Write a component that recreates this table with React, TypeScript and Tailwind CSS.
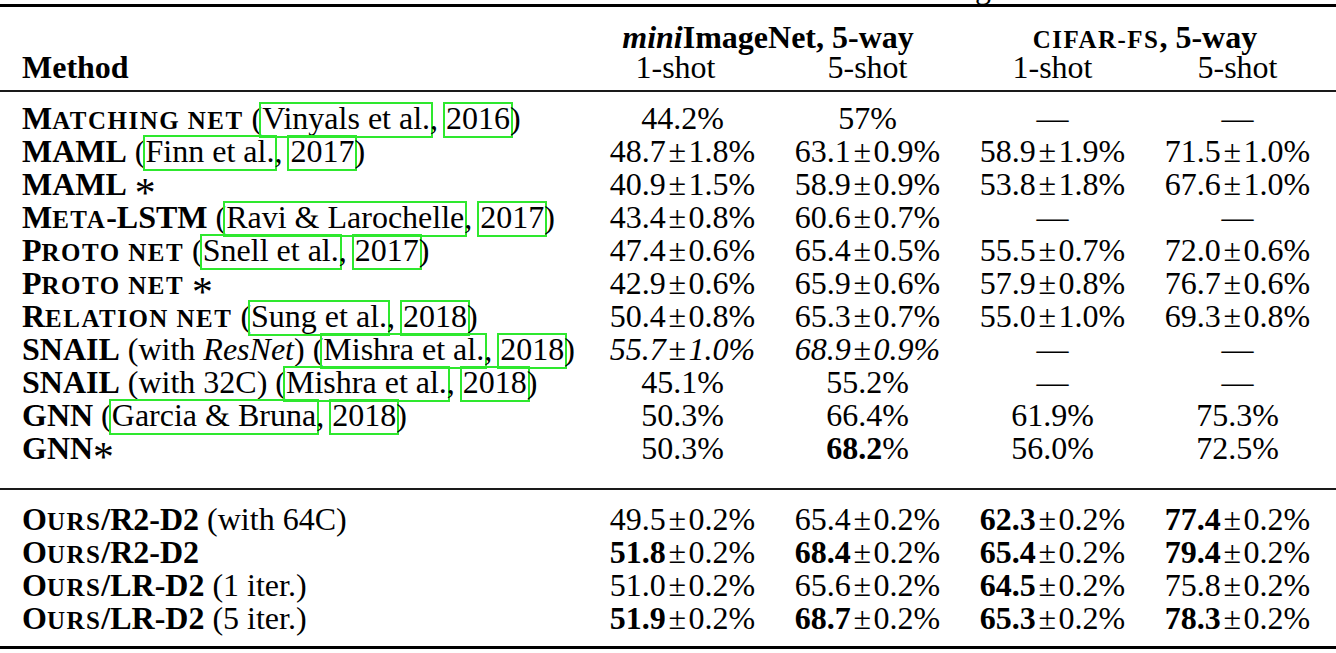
import React from "react";

type Val = { v: string; e?: string; b?: boolean; i?: boolean } | null;

interface Row {
  label: React.ReactNode;
  vals: Val[];
}

// small caps as LaTeX draws them: wider and taller than the browser's synthesized ones
function Sm({ children }: { children: React.ReactNode }) {
  return <span className="text-[0.78em] uppercase tracking-[0.06em]">{children}</span>;
}

function Cite({ children }: { children: React.ReactNode }) {
  return (
    <span className="-mx-[3px] inline-block border-2 border-[#2ee82e] px-px pb-[4px] leading-[28px]">
      {children}
    </span>
  );
}

function Ast() {
  return <span className="align-[-0.28em] text-[1.3em] font-normal leading-[0]">*</span>;
}

const pm = (v: string, e: string, b = false): Val => ({ v, e, b });

const baseRows: Row[] = [
  {
    label: (
      <>
        <b>
          M<Sm>atching net</Sm>
        </b>{" "}
        (<Cite>Vinyals et al.</Cite>, <Cite>2016</Cite>)
      </>
    ),
    vals: [{ v: "44.2" }, { v: "57" }, null, null],
  },
  {
    label: (
      <>
        <b>MAML</b> (<Cite>Finn et al.</Cite>, <Cite>2017</Cite>)
      </>
    ),
    vals: [pm("48.7", "1.8"), pm("63.1", "0.9"), pm("58.9", "1.9"), pm("71.5", "1.0")],
  },
  {
    label: (
      <>
        <b>MAML</b> <Ast />
      </>
    ),
    vals: [pm("40.9", "1.5"), pm("58.9", "0.9"), pm("53.8", "1.8"), pm("67.6", "1.0")],
  },
  {
    label: (
      <>
        <b>
          M<Sm>eta</Sm>-LSTM
        </b>{" "}
        (<Cite>Ravi &amp; Larochelle</Cite>, <Cite>2017</Cite>)
      </>
    ),
    vals: [pm("43.4", "0.8"), pm("60.6", "0.7"), null, null],
  },
  {
    label: (
      <>
        <b>
          P<Sm>roto net</Sm>
        </b>{" "}
        (<Cite>Snell et al.</Cite>, <Cite>2017</Cite>)
      </>
    ),
    vals: [pm("47.4", "0.6"), pm("65.4", "0.5"), pm("55.5", "0.7"), pm("72.0", "0.6")],
  },
  {
    label: (
      <>
        <b>
          P<Sm>roto net</Sm>
        </b>{" "}
        <Ast />
      </>
    ),
    vals: [pm("42.9", "0.6"), pm("65.9", "0.6"), pm("57.9", "0.8"), pm("76.7", "0.6")],
  },
  {
    label: (
      <>
        <b>
          R<Sm>elation net</Sm>
        </b>{" "}
        (<Cite>Sung et al.</Cite>, <Cite>2018</Cite>)
      </>
    ),
    vals: [pm("50.4", "0.8"), pm("65.3", "0.7"), pm("55.0", "1.0"), pm("69.3", "0.8")],
  },
  {
    label: (
      <>
        <b>SNAIL</b> (with <i>ResNet</i>) (<Cite>Mishra et al.</Cite>, <Cite>2018</Cite>)
      </>
    ),
    vals: [
      { v: "55.7", e: "1.0", i: true },
      { v: "68.9", e: "0.9", i: true },
      null,
      null,
    ],
  },
  {
    label: (
      <>
        <b>SNAIL</b> (with 32C) (<Cite>Mishra et al.</Cite>, <Cite>2018</Cite>)
      </>
    ),
    vals: [{ v: "45.1" }, { v: "55.2" }, null, null],
  },
  {
    label: (
      <>
        <b>GNN</b> (<Cite>Garcia &amp; Bruna</Cite>, <Cite>2018</Cite>)
      </>
    ),
    vals: [{ v: "50.3" }, { v: "66.4" }, { v: "61.9" }, { v: "75.3" }],
  },
  {
    label: (
      <>
        <b>GNN</b>
        <Ast />
      </>
    ),
    vals: [{ v: "50.3" }, { v: "68.2", b: true }, { v: "56.0" }, { v: "72.5" }],
  },
];

const oursRows: Row[] = [
  {
    label: (
      <>
        <b>
          O<Sm>urs</Sm>/R2-D2
        </b>{" "}
        (with 64C)
      </>
    ),
    vals: [pm("49.5", "0.2"), pm("65.4", "0.2"), pm("62.3", "0.2", true), pm("77.4", "0.2", true)],
  },
  {
    label: (
      <b>
        O<Sm>urs</Sm>/R2-D2
      </b>
    ),
    vals: [
      pm("51.8", "0.2", true),
      pm("68.4", "0.2", true),
      pm("65.4", "0.2", true),
      pm("79.4", "0.2", true),
    ],
  },
  {
    label: (
      <>
        <b>
          O<Sm>urs</Sm>/LR-D2
        </b>{" "}
        (1 iter.)
      </>
    ),
    vals: [pm("51.0", "0.2"), pm("65.6", "0.2"), pm("64.5", "0.2", true), pm("75.8", "0.2")],
  },
  {
    label: (
      <>
        <b>
          O<Sm>urs</Sm>/LR-D2
        </b>{" "}
        (5 iter.)
      </>
    ),
    vals: [
      pm("51.9", "0.2", true),
      pm("68.7", "0.2", true),
      pm("65.3", "0.2", true),
      pm("78.3", "0.2", true),
    ],
  },
];

function Cell({ val }: { val: Val }) {
  if (!val) return <div className="text-center">—</div>;
  return (
    <div className={`whitespace-nowrap text-center ${val.i ? "italic" : ""}`}>
      <span className={val.b ? "font-bold" : ""}>{val.v}</span>
      {val.e && (
        <>
          <span className="mx-[0.08em] not-italic">±</span>
          {val.e}
        </>
      )}
      %
    </div>
  );
}

function TableRow({ row }: { row: Row }) {
  return (
    <div className="grid h-[33px] grid-cols-[590px_185px_185px_185px_185px] leading-[33px]">
      <div className="whitespace-nowrap pl-[22px]">{row.label}</div>
      {row.vals.map((v, i) => (
        <Cell key={i} val={v} />
      ))}
    </div>
  );
}

export default function App() {
  return (
    <div className="h-[653px] w-[1336px] overflow-hidden bg-white font-['Liberation_Serif','Times_New_Roman',serif] text-[32px] text-black">
      <div className="h-[4px] overflow-hidden">
        <div className="-mt-[29px] pl-[975px] leading-[33px]">g</div>
      </div>
      <div className="h-[3px] bg-black" />

      <div className="mt-[15px] grid h-[30px] grid-cols-[590px_370px_370px] leading-[30px]">
        <div />
        <div className="pr-[14px] text-center font-bold">
          <i>mini</i>ImageNet, 5-way
        </div>
        <div className="text-center font-bold">
          <Sm>cifar-fs</Sm>, 5-way
        </div>
      </div>
      <div className="grid h-[30px] grid-cols-[590px_185px_185px_185px_185px] leading-[30px]">
        <div className="pl-[22px] font-bold">Method</div>
        <div className="pr-[14px] text-center">1-shot</div>
        <div className="text-center">5-shot</div>
        <div className="text-center">1-shot</div>
        <div className="text-center">5-shot</div>
      </div>

      <div className="mt-[8px] h-[2px] bg-[#1a1a1a]" />

      <div className="mt-[10px]">
        {baseRows.map((r, i) => (
          <TableRow key={i} row={r} />
        ))}
      </div>

      <div className="mt-[23px] h-[2px] bg-[#1a1a1a]" />

      <div className="mt-[13px]">
        {oursRows.map((r, i) => (
          <TableRow key={i} row={r} />
        ))}
      </div>

      <div className="mt-[11px] h-[3px] bg-black" />
    </div>
  );
}
